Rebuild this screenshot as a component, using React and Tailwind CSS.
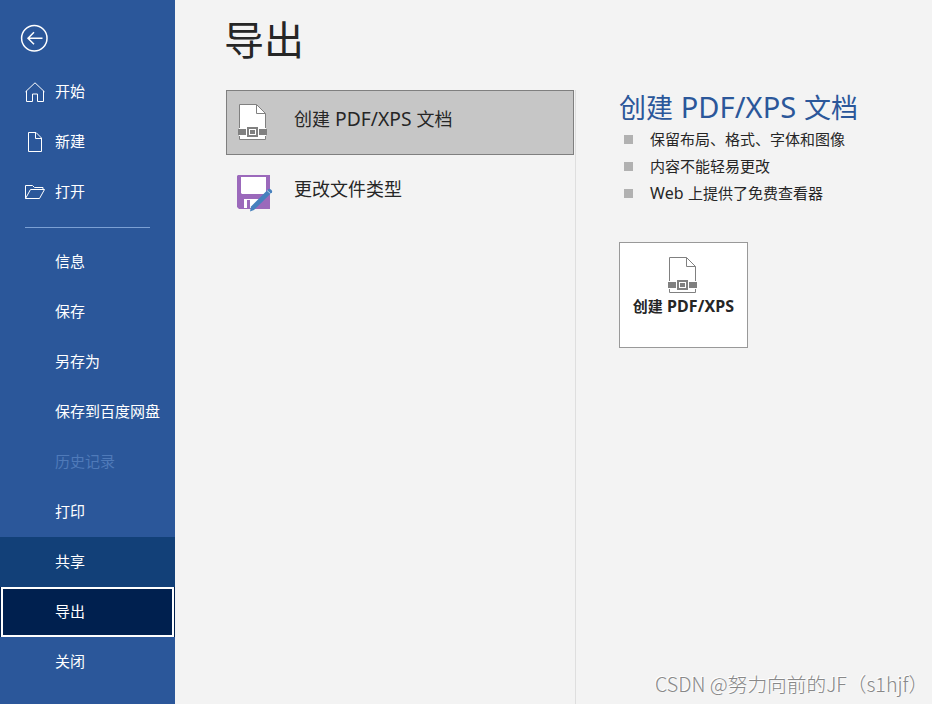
import React from "react";

const sans = "font-['Noto_Sans','Noto_Sans_CJK_SC',sans-serif]";

function HomeIcon() {
  return (
    <svg width="20" height="20" viewBox="0 0 20 20" fill="none" stroke="#fff" strokeWidth="1">
      <path d="M.5 9.8 10 .8l9.500 9M1.500 9v10.500h6v-7.500h5v7.500h6V9" />
    </svg>
  );
}

function NewIcon() {
  return (
    <svg width="20" height="20" viewBox="0 0 20 20" fill="none" stroke="#fff" strokeWidth="1">
      <path d="M3.500 .5h7.500l5.500 5.500v13.500h-13zM10.500 .5v6h6" />
    </svg>
  );
}

function OpenIcon() {
  return (
    <svg width="20" height="20" viewBox="0 0 20 20" fill="none" stroke="#fff" strokeWidth="1">
      <path d="M.5 16.500v-13h7l2 2h8.500v2.500M.5 16.500l5-9h14l-5 9z" />
    </svg>
  );
}

function PdfIcon({ gap }) {
  return (
    <svg width="29" height="36" viewBox="0 0 29 36" className="shrink-0">
      <path d="M1.500 .5h17l9 9v26h-26z" fill="#fff" stroke="#808080" />
      <path d="M18.500 .5v9h9" fill="none" stroke="#808080" />
      <path d={gap} fill="#fff" />
      <path d="M0 25h8v6H0zM21 25h8v6h-8z" fill="#808080" />
      <path d="M10 24h9v8h-9z" fill="#fff" stroke="#808080" strokeWidth="2" />
      <path d="M12 26h5v4h-5z" fill="#808080" />
    </svg>
  );
}

function FileTypeIcon() {
  return (
    <svg width="36" height="37" viewBox="0 0 36 37" className="shrink-0">
      <path d="M1 0h32v34H2l-2-2V1z" fill="#9b69bb" />
      <path d="M4 2h25v17H5l-1-1zM7 24h17l-8 9H7z" fill="#fff" />
      <path d="M10 25h3v8h-3z" fill="#9b69bb" />
      <path d="m13 36.500 1-5L31.500 14c1.200-1 4.500 1.800 3.500 3.200L17 35z" fill="#4680bd" />
      <path d="m30 15.500 4 3.500" stroke="#b8cfe6" strokeWidth="1" />
    </svg>
  );
}

const primary = [
  { label: "开始", icon: <HomeIcon /> },
  { label: "新建", icon: <NewIcon /> },
  { label: "打开", icon: <OpenIcon /> },
];

const secondary = [
  { label: "信息" },
  { label: "保存" },
  { label: "另存为" },
  { label: "保存到百度网盘" },
  { label: "历史记录", style: "text-[#4f7ab9]" },
  { label: "打印" },
  { label: "共享", style: "bg-[#124078]" },
  { label: "导出", style: "bg-[#00204f]", focus: true },
  { label: "关闭" },
];

const features = [
  { text: "保留布局、格式、字体和图像" },
  { text: "内容不能轻易更改" },
  { latin: "Web ", text: "上提供了免费查看器" },
];

export default function App() {
  return (
    <div className={`relative flex h-[704px] w-[932px] overflow-hidden bg-[#f3f3f3] text-[#262626] ${sans}`}>
      <nav className="flex w-[175px] shrink-0 flex-col bg-[#2b579a] text-[15px] text-white">
        <button className="mt-6 mb-[15px] ml-5 size-7">
          <svg width="28" height="28" viewBox="0 0 28 28" fill="none" stroke="#fff" strokeWidth="1.500">
            <circle cx="14.300" cy="14.300" r="12.700" />
            <path d="M22.500 14.300H7.800M14 8.300l-6 6 6 6" />
          </svg>
        </button>
        {primary.map(({ label, icon }) => (
          <a key={label} className="flex h-[50px] items-center gap-2.5 pl-[25px]">
            {icon}
            <span className="-mt-0.5">{label}</span>
          </a>
        ))}
        <hr className="mx-[25px] mt-2.5 mb-[9px] border-[#7ba0d4]" />
        {secondary.map(({ label, style, focus }) => (
          <a key={label} className={`flex h-[50px] items-center ${style ?? ""} ${focus ? "px-px" : ""}`}>
            <span className={`flex h-full w-full items-center ${focus ? "border-2 border-white pl-[52px]" : "pl-[55px]"}`}>
              <span className="-mt-0.5">{label}</span>
            </span>
          </a>
        ))}
      </nav>

      <main className="flex flex-1 flex-col">
        <h1 className="flex h-[90px] items-center pb-[11px] pl-[49px] text-[40px] leading-none">导出</h1>
        <div className="flex flex-1">
          <section className="w-[401px] shrink-0 border-r border-[#dedede] pl-[51px] text-[18px]">
            <button className="flex h-[65px] w-[348px] items-center border border-[#7f7f7f] bg-[#c6c6c6] pl-[11px]">
              <span className="-mt-0.5">
                <PdfIcon gap="M1 24h27v8H1z" />
              </span>
              <span className="-mt-[7px] ml-[27px] leading-7 whitespace-nowrap">
                创建<span className="text-[19.300px]"> PDF/XPS </span>文档
              </span>
            </button>
            <button className="flex h-[76px] w-[348px] items-center pl-[11px]">
              <FileTypeIcon />
              <span className="-mt-[7px] ml-[21px]">更改文件类型</span>
            </button>
          </section>

          <section className="flex flex-1 flex-col items-start pl-[43px]">
            <h2 className="flex h-9 items-baseline text-[27px] leading-[34px] whitespace-pre text-[#2b579a]">
              <span>创建</span>
              <span className="text-[29px] tracking-[0.100px]"> PDF/XPS </span>
              <span>文档</span>
            </h2>
            <ul className="text-[15px]">
              {features.map(({ latin, text }) => (
                <li key={text} className="flex h-[27px] items-center gap-[17px] pl-[5px] leading-none">
                  <span className="size-[9px] bg-[#b1b1b1]" />
                  <span className={`whitespace-nowrap ${latin ? "-mt-0.5" : ""}`}>
                    {latin && <span className="text-[16px] tracking-[0.100px]">{latin}</span>}
                    {text}
                  </span>
                </li>
              ))}
            </ul>
            <button className="mt-[35px] flex h-[106px] w-[129px] flex-col items-center border border-[#999] bg-white pt-3.5 text-[15px] font-bold">
              <span className="mr-[3px]">
                <PdfIcon gap="M0 24h29v8H0z" />
              </span>
              <span className="mt-[5px] leading-none whitespace-nowrap">
                创建<span className="text-[16px] tracking-[0.100px]"> PDF/XPS</span>
              </span>
            </button>
          </section>
        </div>
      </main>

      <div className="absolute top-[672px] left-[655px] font-['Noto_Sans_CJK_SC',sans-serif] text-[19.700px] leading-6 font-light whitespace-nowrap text-[#888] [text-shadow:-1px_-1px_0_#fff]">
        CSDN @努力向前的JF（s1hjf）
      </div>
    </div>
  );
}
